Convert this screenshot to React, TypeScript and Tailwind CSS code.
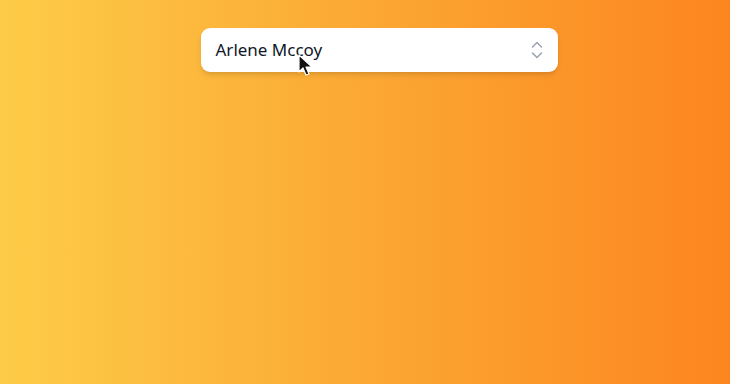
import React from 'react';

const ChevronUpDown = () => (
  <svg viewBox="0 0 20 20" fill="none" stroke="currentColor" strokeWidth="1.5" className="h-5 w-5 text-gray-400" aria-hidden="true">
    <path d="M5.5 7 10 2.5 14.5 7M5.5 13 10 17.5 14.5 13" strokeLinecap="round" strokeLinejoin="round" />
  </svg>
);

const Pointer = () => (
  <svg width="16" height="24" viewBox="0 0 16 24" className="absolute left-[97px] top-[26px] pointer-events-none">
    <path d="M1 1 L1 18 L5 14 L8 21 L11 20 L8 13 L14 13 Z" fill="#111" stroke="#fff" strokeWidth="1.2" strokeLinejoin="round" />
  </svg>
);

const App = () => {
  return (
    <div className="min-h-screen w-full bg-gradient-to-r from-[#fdcc47] via-[#fba834] to-[#fc851f] font-['Noto_Sans',sans-serif]">
      <div className="flex justify-center pl-7 pt-7">
        <div className="relative w-[357px]">
          {/* Listbox button */}
          <button className="flex h-11 w-full items-center justify-between rounded-[9px] bg-white pl-[15px] pr-[11px] text-left shadow-md">
            <span className="text-[17px] text-gray-900">Arlene Mccoy</span>
            <ChevronUpDown />
          </button>
          <Pointer />
        </div>
      </div>
    </div>
  );
};

export default App;
